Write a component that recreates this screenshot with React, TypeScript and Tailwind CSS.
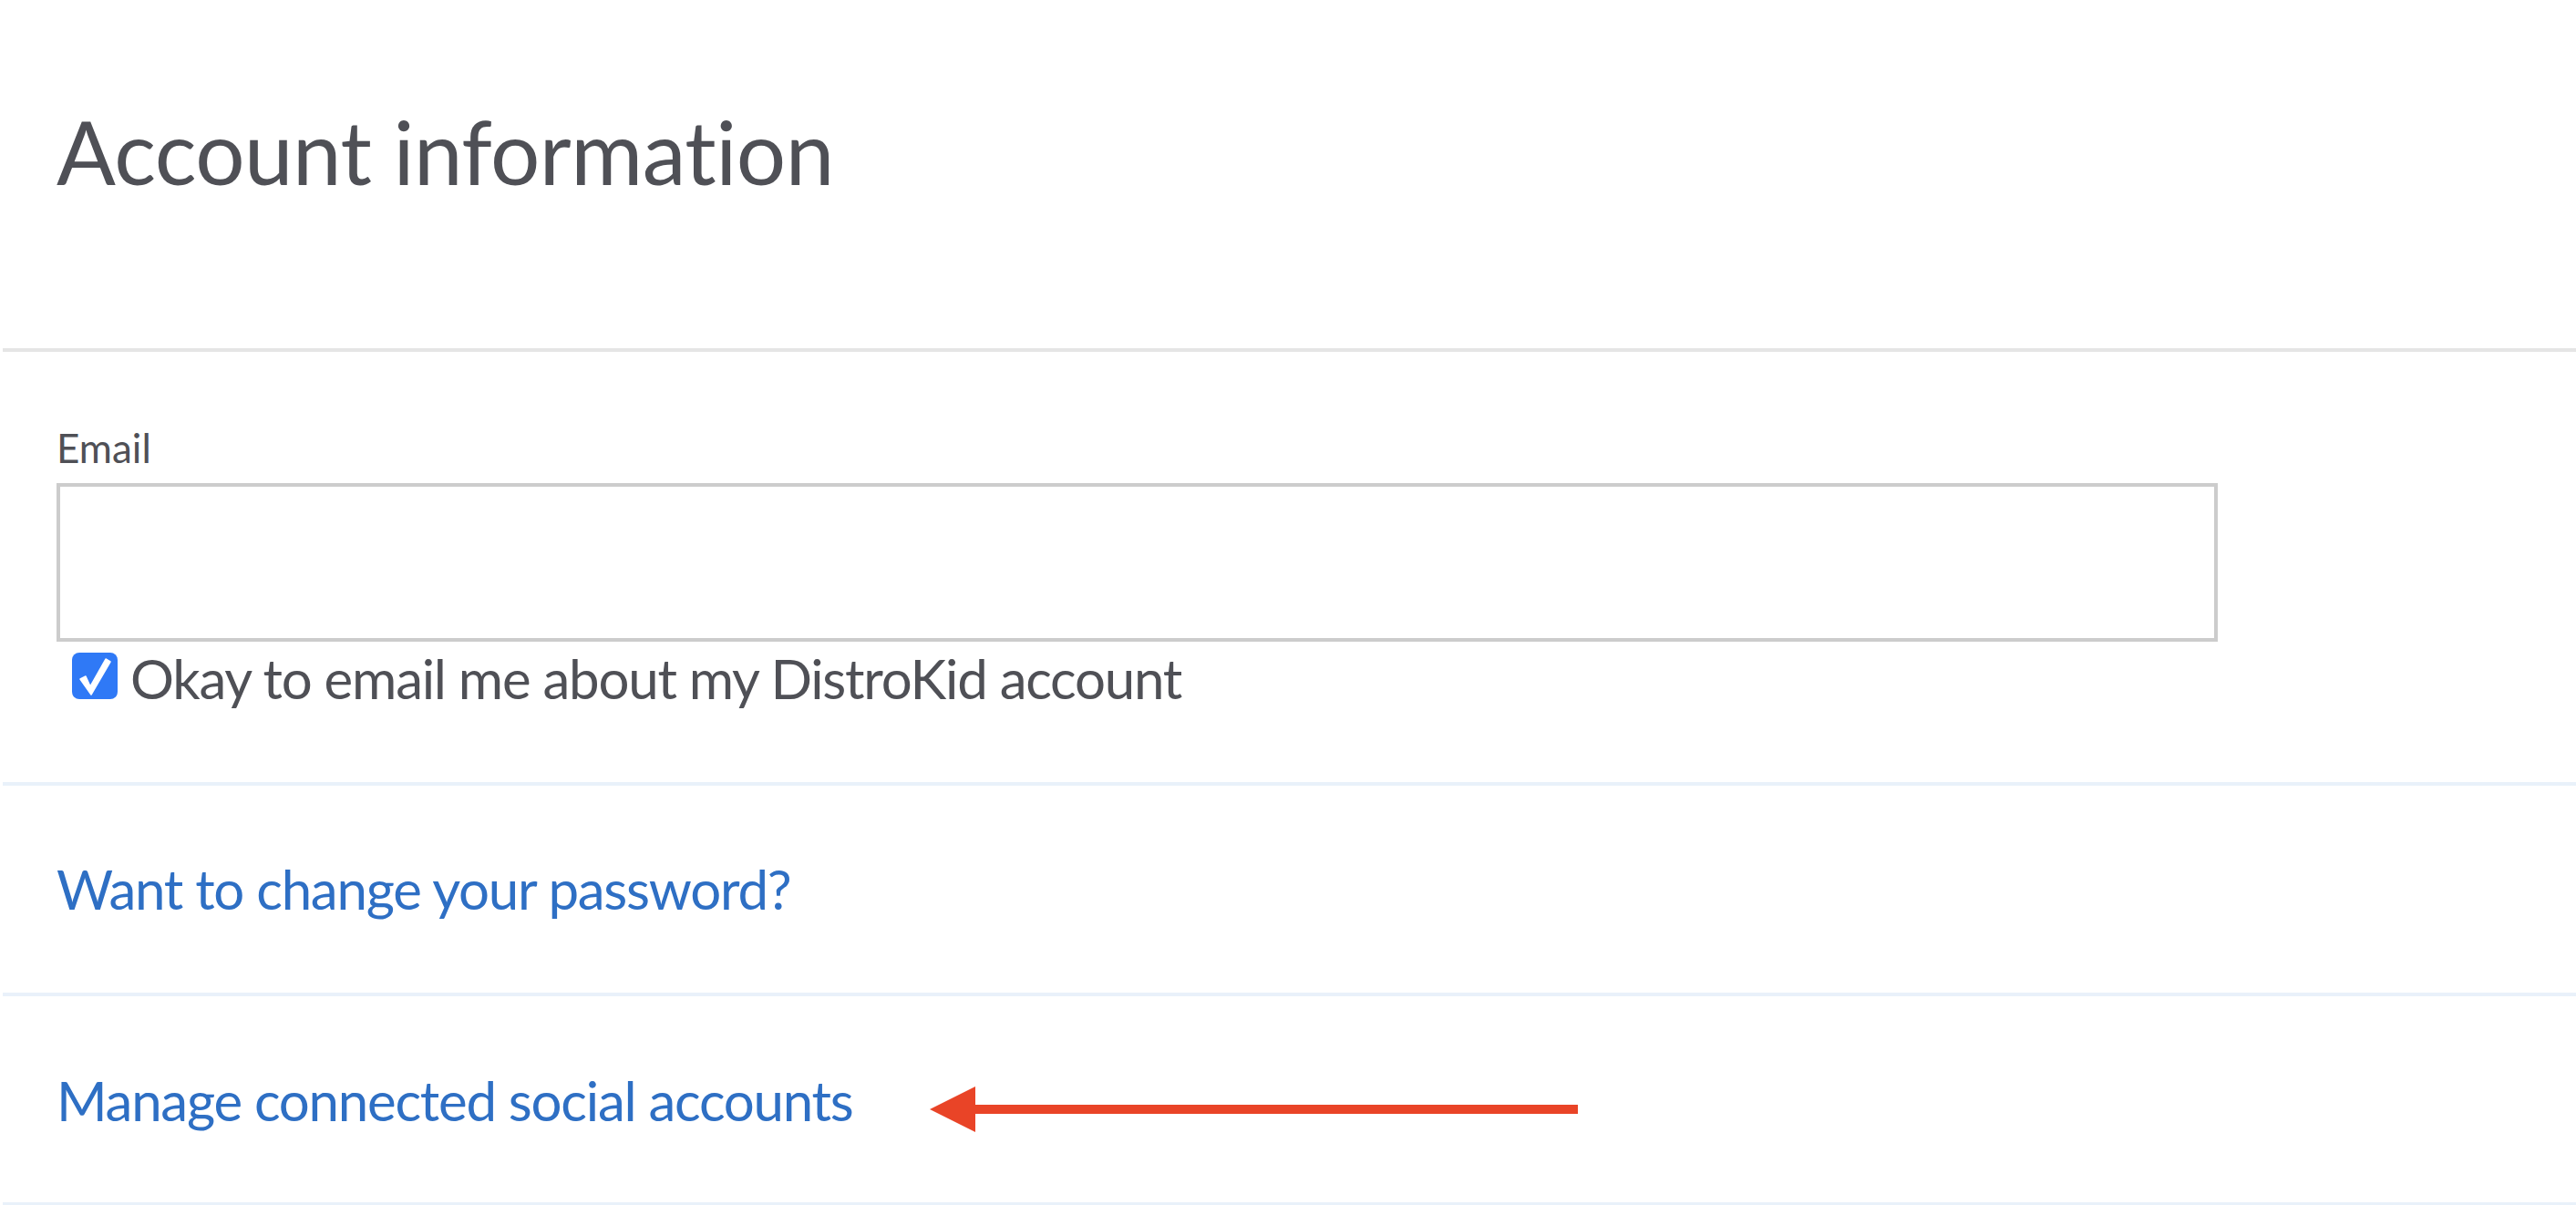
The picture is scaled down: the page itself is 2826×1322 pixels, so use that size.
import React from "react";

export default function App() {
  return (
    <div className="min-h-screen bg-white pl-[3px] font-[Lato,'Open_Sans',sans-serif]">
      {/* Header */}
      <div className="h-[386px] border-b-4 border-[#e5e5e5] px-[59px] pt-[118px]">
        <h1 className="text-[96px] leading-none font-normal tracking-[-0.5px] text-[#4f5056]">
          Account information
        </h1>
      </div>

      {/* Email */}
      <div className="h-[476px] border-b-4 border-[#e9f1fa] px-[59px] pt-[83px]">
        <label className="block text-[44px] leading-none text-[#4f5056]">
          Email
        </label>
        <div className="mt-[17px] h-[174px] w-[2371px] border-4 border-[#cccccc] bg-white" />
        <div className="mt-[10px] flex items-start gap-[14px] pl-[17px]">
          <CheckBox />
          <span className="text-[60px] leading-none tracking-[-1.25px] text-[#4f5056]">
            Okay to email me about my DistroKid account
          </span>
        </div>
      </div>

      {/* Password */}
      <div className="h-[231px] border-b-4 border-[#e9f1fa] px-[59px] pt-[83px]">
        <a className="text-[60px] leading-none tracking-[-1.25px] text-[#2e6fc4]" href="#">
          Want to change your password?
        </a>
      </div>

      {/* Social accounts */}
      <div className="h-[230px] border-b-4 border-[#e9f1fa] px-[59px] pt-[84px]">
        <div className="flex items-start">
          <a className="text-[60px] leading-none tracking-[-1.25px] text-[#2e6fc4]" href="#">
            Manage connected social accounts
          </a>
          <Arrow />
        </div>
      </div>
    </div>
  );
}

function CheckBox() {
  return (
    <div className="mt-[2px] flex h-[51px] w-[50px] shrink-0 items-center justify-center rounded-[8px] bg-[#2f79f6]">
      <svg width="50" height="51" viewBox="0 0 50 51">
        <path
          d="M9 29 L15 26 L20 37 L37 7 L42 10 L21 46 Z"
          fill="white"
          stroke="white"
          strokeWidth="1.5"
          strokeLinejoin="round"
        />
      </svg>
    </div>
  );
}

function Arrow() {
  return (
    <svg
      className="ml-[84px] mt-[15px] shrink-0"
      width="711"
      height="50"
      viewBox="0 0 711 50"
    >
      <polygon points="0,25 50,0 50,50" fill="#e94427" />
      <rect x="48" y="20" width="663" height="10" fill="#e94427" />
    </svg>
  );
}
